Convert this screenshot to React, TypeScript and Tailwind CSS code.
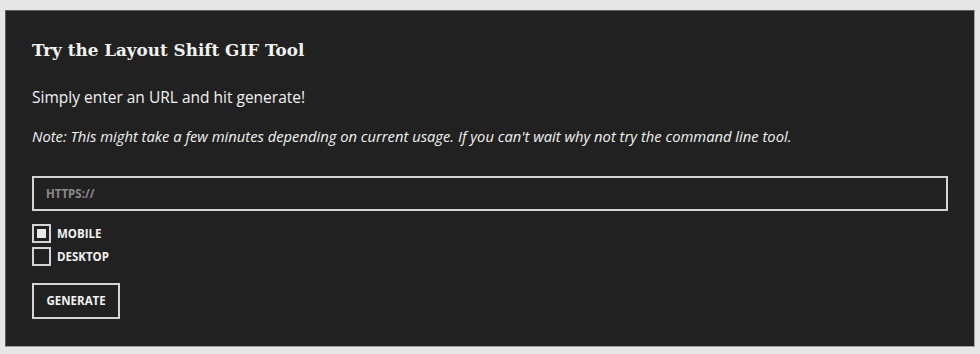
import { useState } from 'react';

export default function App() {
  const [device, setDevice] = useState<'mobile' | 'desktop'>('mobile');

  return (
    <div className="min-h-[354px] bg-[#e6e6e7] px-[5px] pt-[10px] pb-[6px] font-['Open_Sans',sans-serif]">
      <div className="bg-[#212121] border border-[#5e5e5e] border-r-[#a0a0a0] border-b-[#a0a0a0] pl-[26px] pr-[26px] pt-[26px] pb-[27px] text-[#f2f2f2]">
        {/* Heading */}
        <h2 className="font-['DejaVu_Serif',serif] font-bold text-[16.8px] leading-[26px]">
          Try the Layout Shift GIF Tool
        </h2>
        <p className="mt-[23px] text-[15.5px] leading-[22px]">Simply enter an URL and hit generate!</p>
        <p className="mt-[17px] text-[14.75px] leading-[22px] italic">
          Note: This might take a few minutes depending on current usage. If you can't wait why not try the command line tool.
        </p>

        {/* Form */}
        <input
          type="text"
          placeholder="HTTPS://"
          className="mt-[29px] block w-full h-[35px] bg-transparent border-2 border-[#d4d4d4] px-[12px] text-[11.5px] font-bold uppercase text-[#ddd] placeholder:text-[#8a8a8a] outline-none"
        />

        <div className="mt-[13px] flex flex-col gap-[4px]">
          {[
            { id: 'mobile', label: 'Mobile' },
            { id: 'desktop', label: 'Desktop' },
          ].map(({ id, label }) => (
            <label key={id} className="flex items-center gap-[6px] cursor-pointer">
              <span
                onClick={() => setDevice(id as any)}
                className="w-[19px] h-[19px] border-2 border-[#d4d4d4] flex items-center justify-center"
              >
                {device === id && <span className="w-[9px] h-[9px] bg-[#e8e8e8]" />}
              </span>
              <span className="text-[11.5px] font-bold uppercase leading-[19px]">{label}</span>
            </label>
          ))}
        </div>

        <button className="mt-[17px] h-[36px] px-[12.5px] border-2 border-[#d4d4d4] text-[11.5px] font-bold uppercase cursor-pointer">
          Generate
        </button>
      </div>
    </div>
  );
}
